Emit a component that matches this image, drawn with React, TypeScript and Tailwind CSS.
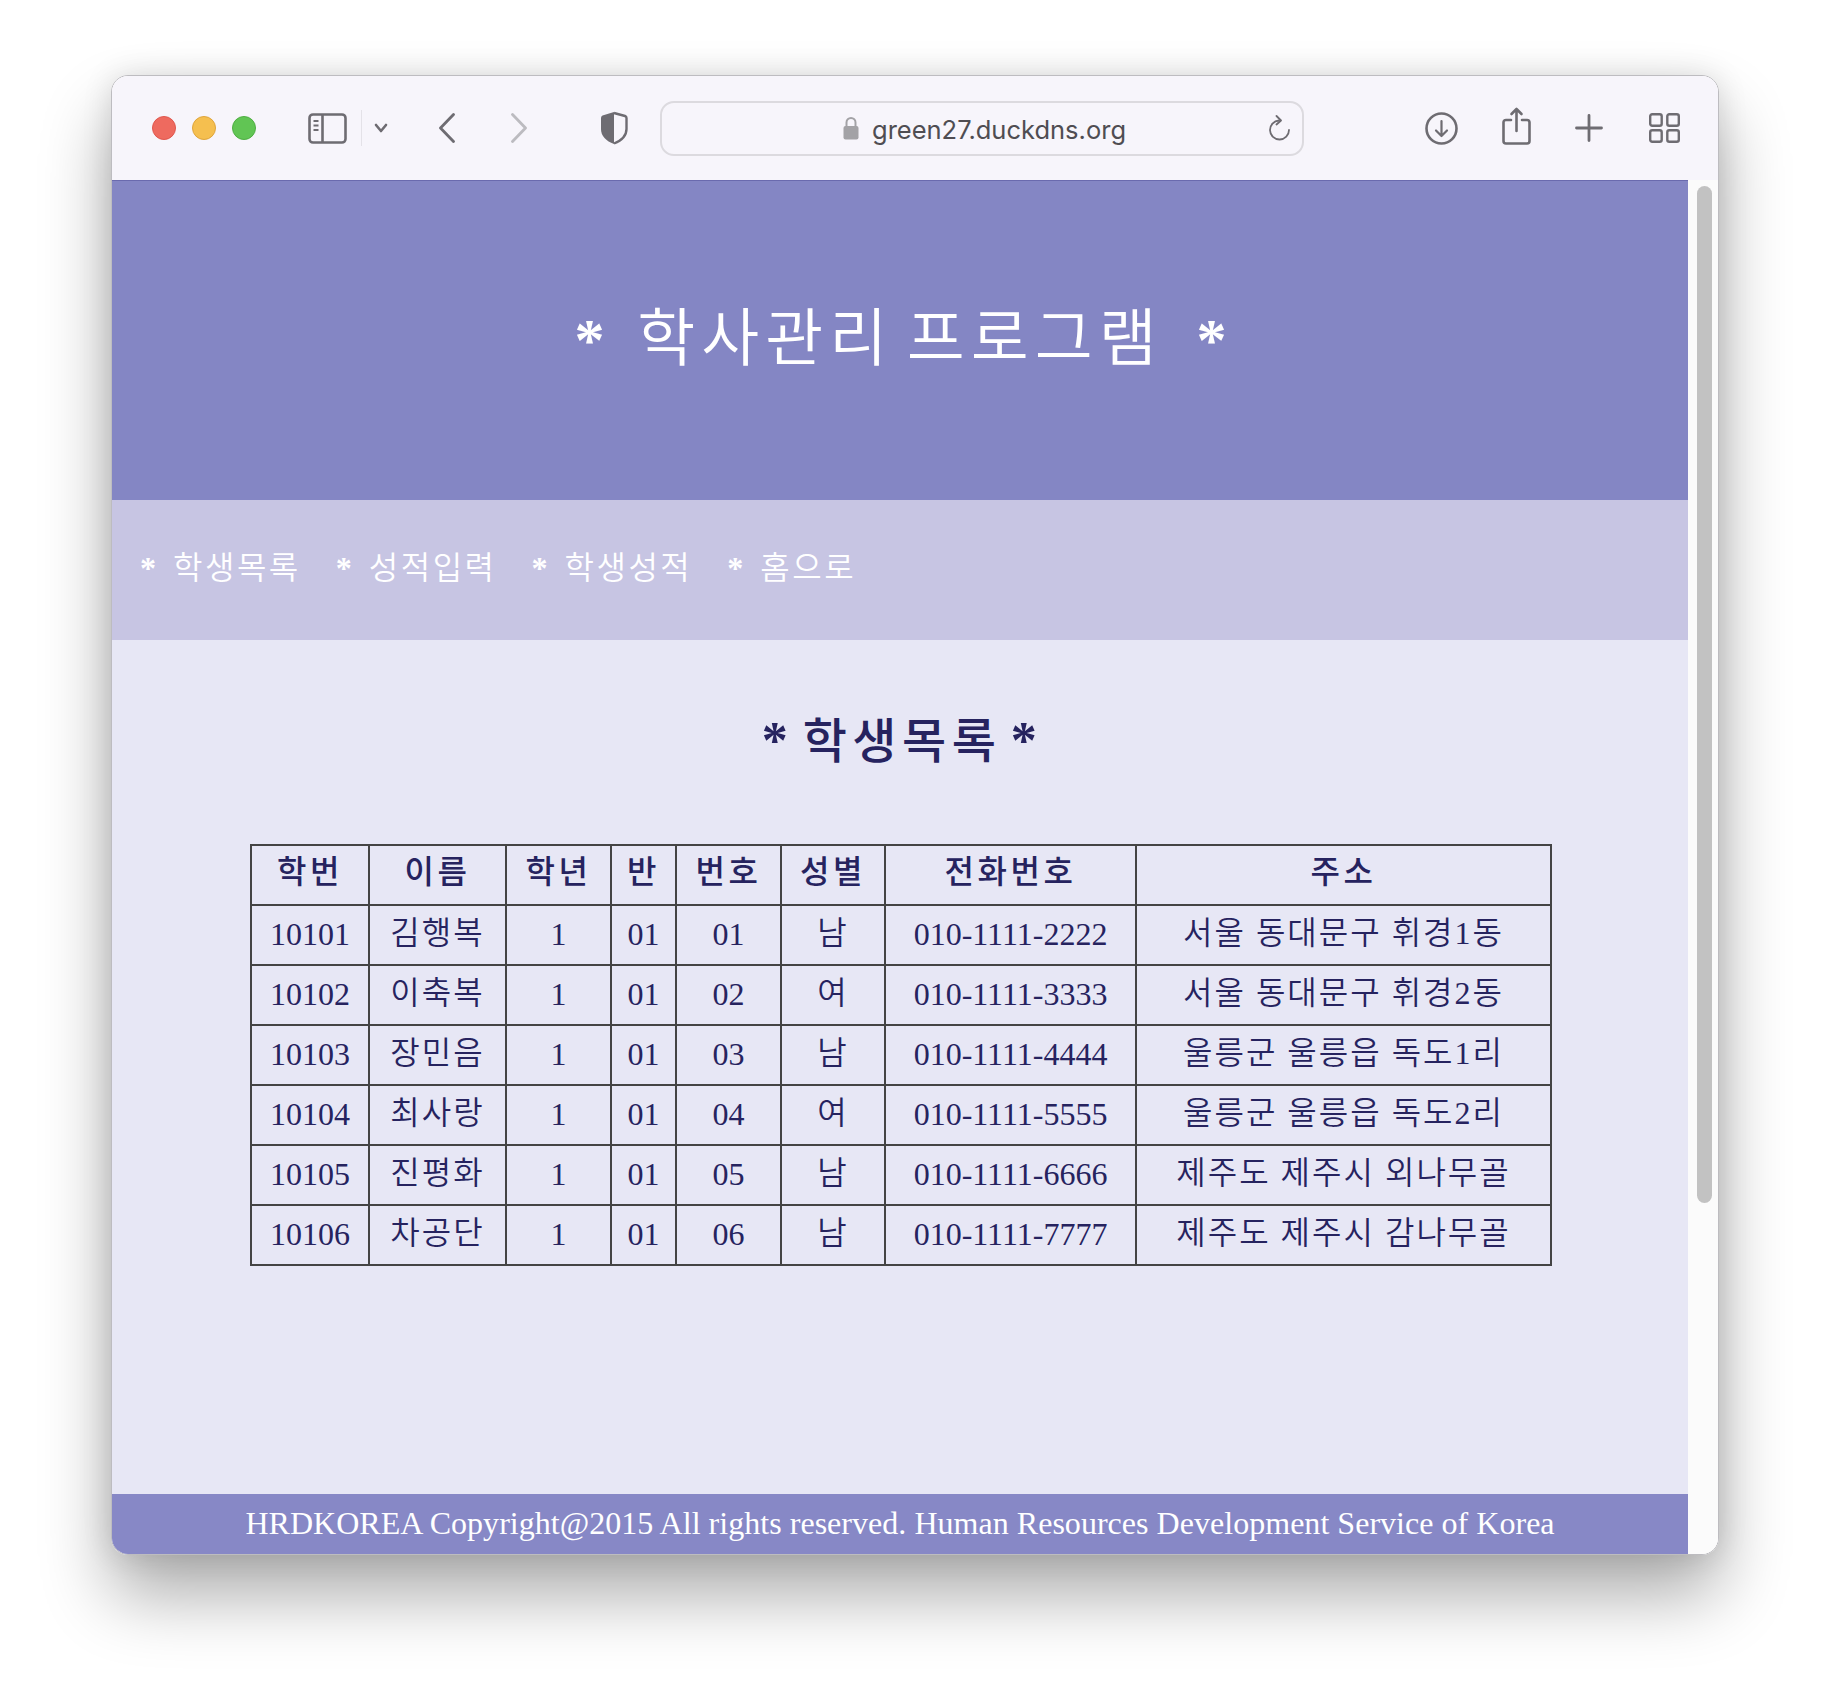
const rows = [
  ['10101', '김행복', '1', '01', '01', '남', '010-1111-2222', '서울 동대문구 휘경1동'],
  ['10102', '이축복', '1', '01', '02', '여', '010-1111-3333', '서울 동대문구 휘경2동'],
  ['10103', '장민음', '1', '01', '03', '남', '010-1111-4444', '울릉군 울릉읍 독도1리'],
  ['10104', '최사랑', '1', '01', '04', '여', '010-1111-5555', '울릉군 울릉읍 독도2리'],
  ['10105', '진평화', '1', '01', '05', '남', '010-1111-6666', '제주도 제주시 외나무골'],
  ['10106', '차공단', '1', '01', '06', '남', '010-1111-7777', '제주도 제주시 감나무골'],
];

const heads = ['학번', '이름', '학년', '반', '번호', '성별', '전화번호', '주소'];
const navItems = ['학생목록', '성적입력', '학생성적', '홈으로'];
// columns holding hangul sit a little higher than the digits
const hangulCols = [1, 5, 7];

function Toolbar() {
  return (
    <div className="flex h-[104px] items-center bg-[#f7f5fb] pl-[40px]">
      <div className="flex gap-[16px]">
        <span className="h-[24px] w-[24px] rounded-full border border-[#e0574e] bg-[#ee6a5f]" />
        <span className="h-[24px] w-[24px] rounded-full border border-[#dfa53c] bg-[#f5bf4f]" />
        <span className="h-[24px] w-[24px] rounded-full border border-[#4fae43] bg-[#61c554]" />
      </div>
      <svg className="ml-[52px]" width="39" height="31" viewBox="0 0 39 31" fill="none" stroke="#6e6c72" strokeWidth="2.6">
        <rect x="1.5" y="1.5" width="36" height="28" rx="3.5" />
        <path d="M14.5 1.5v28" />
        <path d="M5.5 8h5M5.5 12.5h5M5.5 17h5" strokeWidth="2" />
      </svg>
      <span className="ml-[14px] h-[36px] w-px bg-[#e4e2e8]" />
      <svg className="ml-[12px]" width="14" height="10" viewBox="0 0 14 10" fill="none" stroke="#6e6c72" strokeWidth="2.6" strokeLinecap="round" strokeLinejoin="round">
        <path d="M2 2l5 6 5-6" />
      </svg>
      <svg className="ml-[51px]" width="16" height="30" viewBox="0 0 16 30" fill="none" stroke="#6e6c72" strokeWidth="2.8" strokeLinecap="round" strokeLinejoin="round">
        <path d="M14.5 1.5L1.5 15l13 13.5" />
      </svg>
      <svg className="ml-[56px]" width="16" height="30" viewBox="0 0 16 30" fill="none" stroke="#bcbbc0" strokeWidth="2.8" strokeLinecap="round" strokeLinejoin="round">
        <path d="M1.5 1.5L14.5 15l-13 13.5" />
      </svg>
      <svg className="ml-[73px]" width="28" height="34" viewBox="0 0 28 34">
        <path d="M14 1L2.5 4.5Q1 5 1 7v11c0 7 5 12 13 15z" fill="#6e6c72" />
        <path d="M14 2l11 3q1.5.5 1.5 2v11c0 6.500-5 11.500-12.500 14.500" fill="none" stroke="#6e6c72" strokeWidth="2.400" />
      </svg>
      <div className="ml-[32px] flex h-[55px] w-[644px] items-center rounded-[14px] border-[2.5px] border-[#dcdadf] pl-[181px] pr-[11px] font-['Inter',sans-serif] text-[25.5px] text-[#4f4d52]">
        <svg width="16" height="24" viewBox="0 0 16 24" fill="none">
          <path d="M3.500 11V6.500a4.500 4.500 0 0 1 9 0V11" stroke="#a3a2a6" strokeWidth="2" />
          <rect x="0.500" y="10" width="15" height="13.500" rx="2" fill="#a3a2a6" />
        </svg>
        <span className="ml-[13px] pt-[3px] leading-none">green27.duckdns.org</span>
        <svg className="ml-auto" width="23" height="26" viewBox="0 0 23 26" fill="none" stroke="#6e6c72" strokeWidth="1.800" strokeLinecap="round" strokeLinejoin="round">
          <path d="M11 5.500a9.500 9.500 0 1 0 10 9.500" />
          <path d="M8.500 1l4.500 4.500-4.500 4" />
        </svg>
      </div>
      <svg className="ml-[121px]" width="33" height="33" viewBox="0 0 33 33" fill="none" stroke="#6e6c72" strokeWidth="2.600" strokeLinecap="round" strokeLinejoin="round">
        <circle cx="16.500" cy="16.500" r="15" />
        <path d="M16.500 9v14.500M11 18.500l5.500 5.500 5.500-5.500" strokeWidth="2.200" />
      </svg>
      <svg className="ml-[44px] -mt-[4px]" width="29" height="38" viewBox="0 0 29 38" fill="none" stroke="#6e6c72" strokeWidth="2.600" strokeLinecap="round" strokeLinejoin="round">
        <path d="M9 13H4q-2.500 0-2.500 2.500V34q0 2.500 2.500 2.500h21q2.500 0 2.500-2.500V15.500Q27.500 13 25 13h-5" />
        <path d="M14.500 2v22M9.500 7l5-5 5 5" />
      </svg>
      <svg className="ml-[44px]" width="28" height="28" viewBox="0 0 28 28" fill="none" stroke="#6e6c72" strokeWidth="2.800" strokeLinecap="round">
        <path d="M14 1.500v25M1.500 14h25" />
      </svg>
      <svg className="ml-[46px]" width="31" height="30" viewBox="0 0 31 30" fill="none" stroke="#6e6c72" strokeWidth="2.400">
        <rect x="1.200" y="1.200" width="11.500" height="11.500" rx="2" />
        <rect x="18.300" y="1.200" width="11.500" height="11.500" rx="2" />
        <rect x="1.200" y="17.300" width="11.500" height="11.500" rx="2" />
        <rect x="18.300" y="17.300" width="11.500" height="11.500" rx="2" />
      </svg>
    </div>
  );
}

function App() {
  return (
    <div className="h-[1702px] w-[1830px] overflow-hidden bg-white pl-[111px] pt-[75px] font-['Liberation_Serif','Noto_Sans_CJK_KR',serif]">
      <div className="h-[1480px] w-[1608px] overflow-hidden rounded-[17px] border border-[#bdbcc0] shadow-[0_40px_70px_rgba(0,0,0,0.33),0_0_30px_rgba(0,0,0,0.12)]">
        <Toolbar />
        <div className="flex h-[1374px]">
          <div className="flex w-[1576px] flex-col">
            <header className="flex h-[320px] justify-center border-t border-[#6a6aae] bg-[#8486c4] pl-[7px] pt-[123px] text-[63px] font-[350] leading-[70px] tracking-[6px] text-white [word-spacing:-8px]">
              <span>
                <b className="mr-[13px] text-[60px] font-bold">*</b> 학사관리 프로그램 <b className="ml-[20px] text-[60px] font-bold">*</b>
              </span>
            </header>
            <nav className="flex h-[140px] gap-[35px] bg-[#c7c5e3] pl-[28px] pt-[48px] text-[32px] font-[350] leading-[40px] tracking-[2.500px] text-white [word-spacing:4px]">
              {navItems.map((item) => (
                <a key={item}><b className="font-bold">*</b> {item}</a>
              ))}
            </nav>
            <main className="flex flex-1 flex-col bg-[#e7e7f5] text-[#26235f]">
              <h2 className="pl-[4px] pt-[71px] text-center text-[48px] font-medium leading-[59px] tracking-[5.500px] [word-spacing:-8px]">
                <b className="text-[52px] font-bold">*</b> 학생목록 <b className="text-[52px] font-bold">*</b>
              </h2>
              <table className="ml-[138px] mt-[73px] w-[1302px] table-fixed border-collapse border-2 border-[#444] text-center text-[32px]">
                <colgroup>
                  <col className="w-[118px]" />
                  <col className="w-[137px]" />
                  <col className="w-[105px]" />
                  <col className="w-[65px]" />
                  <col className="w-[105px]" />
                  <col className="w-[104px]" />
                  <col className="w-[251px]" />
                  <col />
                </colgroup>
                <thead>
                  <tr className="h-[60px]">
                    {heads.map((h) => (
                      <th key={h} className="border-2 border-[#444] p-0 pb-[7px] font-medium tracking-[3.500px]">{h}</th>
                    ))}
                  </tr>
                </thead>
                <tbody>
                  {rows.map((row) => (
                    <tr key={row[0]} className="h-[60px]">
                      {row.map((cell, i) => (
                        <td
                          key={i}
                          className={hangulCols.includes(i)
                            ? 'border-2 border-[#444] p-0 pb-[5px] font-[350] tracking-[2px]'
                            : 'border-2 border-[#444] p-0 pb-[2px] font-[350]'}
                        >
                          {cell}
                        </td>
                      ))}
                    </tr>
                  ))}
                </tbody>
              </table>
            </main>
            <footer className="flex h-[60px] items-center justify-center bg-[#8788c6] pb-[3px] text-[32px] tracking-[0.03px] text-white">
              HRDKOREA Copyright@2015 All rights reserved. Human Resources Development Service of Korea
            </footer>
          </div>
          <div className="flex-1 bg-[#fbfbfb] pl-[9px] pt-[6px]">
            <div className="h-[1017px] w-[15px] rounded-full bg-[#c2c2c2]" />
          </div>
        </div>
      </div>
    </div>
  );
}

export default App;
